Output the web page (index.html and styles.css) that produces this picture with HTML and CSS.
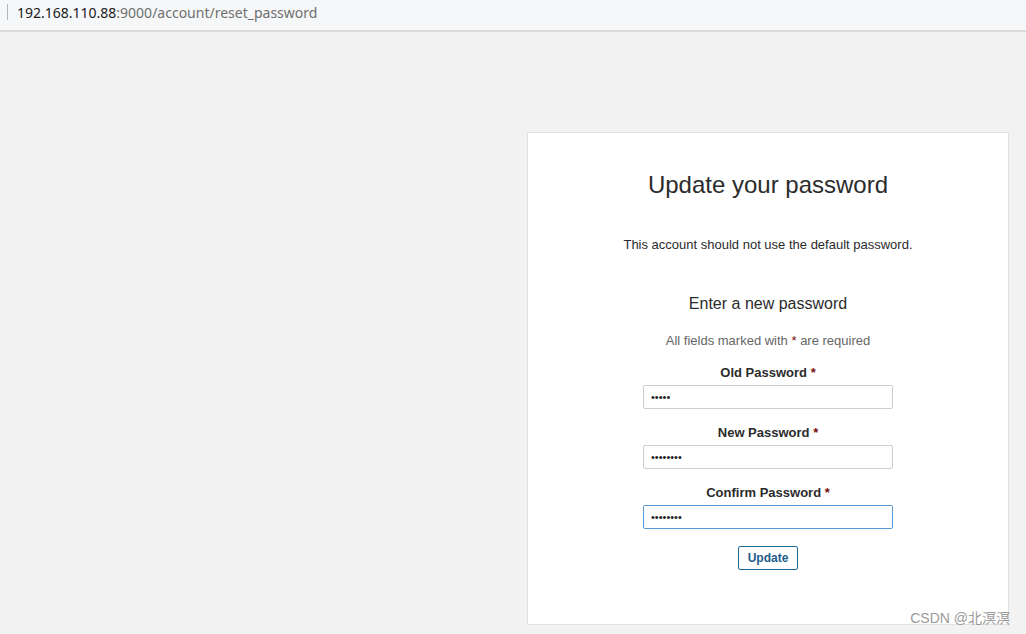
FILE: index.html
```html
<!DOCTYPE html>
<html lang="en">
<head>
  <meta charset="UTF-8" />
  <title>Update your password</title>
  <link rel="stylesheet" href="styles.css">
</head>
<body>
  <div class="addressbar">
    <span class="sep"></span>
    <span class="url"><span class="host">192.168.110.88</span>:9000/account/reset_password</span>
  </div>
  <div class="page">
    <div class="card">
      <h1>Update your password</h1>
      <p class="notice">This account should not use the default password.</p>
      <h2>Enter a new password</h2>
      <p class="hint">All fields marked with <span class="req">*</span> are required</p>
      <form class="form">
        <label>Old Password <span class="req">*</span></label>
        <input type="password" value="12345">
        <label>New Password <span class="req">*</span></label>
        <input type="password" value="12345678">
        <label>Confirm Password <span class="req">*</span></label>
        <input type="password" class="focused" value="12345678">
        <button type="button" class="btn">Update</button>
      </form>
    </div>
  </div>
  <div class="watermark">CSDN @北溟溟</div>
</body>
</html>
```

FILE: styles.css
```css
body {
  margin: 0;
  font-family: "Liberation Sans", Arial, "Noto Sans CJK SC", sans-serif;
  background: #f2f2f2;
  height: 634px;
  overflow: hidden;
}
.addressbar {
  height: 24px;
  padding: 0 0 6px 7px;
  background: #f6f7f8;
  border-bottom: 2px solid #dcdcdc;
  display: flex;
  align-items: center;
}
.sep {
  width: 1px;
  height: 16px;
  background: #b5b5b5;
  margin-right: 9px;
}
.url {
  font-family: "Noto Sans", "Liberation Sans", sans-serif;
  font-size: 14px;
  color: #6f6f6f;
}
.host {
  color: #202020;
}
.page {
  display: flex;
  justify-content: flex-end;
  padding: 100px 17px 0 0;
}
.card {
  width: 480px;
  height: 491px;
  background: #fff;
  border: 1px solid #e1e1e1;
  text-align: center;
  color: #2b2b2b;
}
h1 {
  font-size: 24px;
  font-weight: normal;
  margin: 38px 0 0;
  line-height: 28px;
}
.notice {
  font-size: 13px;
  margin: 38px 0 0;
  line-height: 15px;
}
h2 {
  font-size: 16px;
  font-weight: normal;
  margin: 43px 0 0;
  line-height: 18px;
}
.hint {
  font-size: 13px;
  color: #666;
  margin: 20px 0 0;
  line-height: 15px;
}
.req {
  color: #7a0d0d;
}
.form {
  display: flex;
  flex-direction: column;
  align-items: center;
}
.form label {
  font-size: 13px;
  font-weight: bold;
  margin-top: 17px;
  line-height: 15px;
}
.form input {
  width: 250px;
  height: 24px;
  box-sizing: border-box;
  border: 1px solid #cfcfcf;
  border-radius: 2px;
  margin-top: 5px;
  padding: 0 7px;
  font-size: 11px;
  color: #222;
}
.form label + input + label {
  margin-top: 16px;
}
.form input.focused {
  border-color: #5b9bd5;
}
.btn {
  margin-top: 17px;
  height: 24px;
  width: 60px;
  background: #fff;
  border: 1px solid #1f6a9a;
  border-radius: 2px;
  color: #1f5c8a;
  font-family: "Liberation Sans", Arial, sans-serif;
  font-size: 12px;
  font-weight: bold;
  padding: 0;
}
.watermark {
  position: absolute;
  right: 16px;
  top: 607px;
  font-size: 14px;
  color: #9a9a9a;
  font-family: "Liberation Sans", "Noto Sans CJK SC", sans-serif;
}
```
